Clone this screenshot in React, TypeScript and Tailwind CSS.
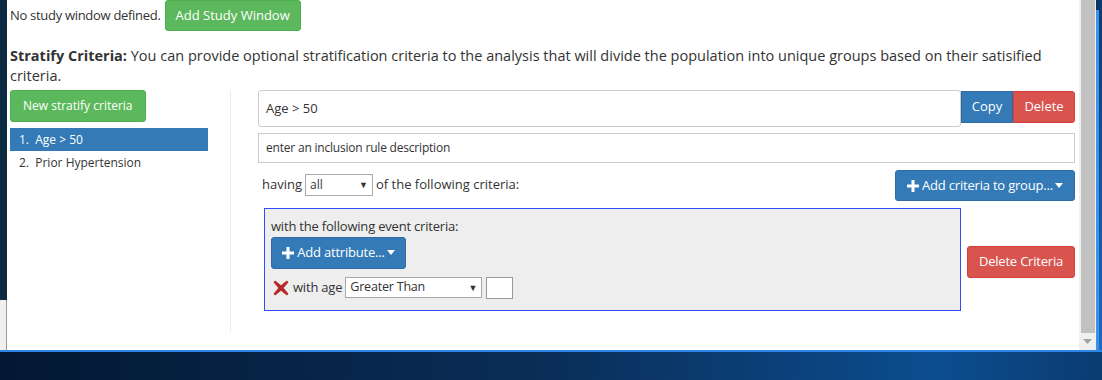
const font = { fontFamily: '"Open Sans", "Noto Sans", sans-serif' };

const Caret = () => (
  <svg width="8" height="5" viewBox="0 0 8 5" className="ml-[2px]">
    <path d="M0 0h8L4 5z" fill="currentColor" />
  </svg>
);

const Plus = () => (
  <svg width="12" height="12" viewBox="0 0 12 12" className="mr-[3px]">
    <path d="M4.5 0h3v4.5H12v3H7.5V12h-3V7.5H0v-3h4.5z" fill="currentColor" />
  </svg>
);

const RedX = () => (
  <svg width="16" height="16" viewBox="0 0 15 15">
    <path d="M2 0.5L7.5 5 13 0.5 14.5 2 10 7.5 14.5 13 13 14.5 7.5 10 2 14.5 0.5 13 5 7.5 0.5 2z" fill="#b52a2a" />
  </svg>
);

const App = () => {
  return (
    <div className="w-[1102px] h-[380px] overflow-hidden flex flex-col bg-[#06203d] text-[#333]" style={font}>
      <div className="h-[350px] flex">
        <div className="w-[7px] flex flex-col">
          <div className="h-[300px] bg-[#0c2b42]" />
          <div className="flex-1 bg-[#efefef] border-r border-[#999]" />
        </div>
        <div className="flex-1 bg-white flex flex-col pl-[3px]">
          <div className="flex items-start gap-[4px]">
            <span className="text-[13px] pt-[6px] tracking-[-0.3px]">No study window defined.</span>
            <button className="h-[31px] px-[10px] rounded-[3px] bg-[#5cb85c] border border-[#4cae4c] text-white text-[13px]">
              Add Study Window
            </button>
          </div>
          <p className="text-[14.5px] leading-[20px] mt-[15px] pr-[20px]">
            <b>Stratify Criteria:</b> You can provide optional stratification criteria to the analysis that will divide the population into unique groups based on their satisified criteria.
          </p>
          <div className="flex mt-[4px] flex-1">
            <div className="w-[198px] flex flex-col">
              <button className="self-start h-[32px] px-[12px] rounded-[3px] bg-[#5cb85c] border border-[#4cae4c] text-white text-[12px]">
                New stratify criteria
              </button>
              <div className="mt-[6px] h-[23px] bg-[#337ab7] text-white text-[12px] flex items-center pl-[9px]">1.&nbsp; Age &gt; 50</div>
              <div className="h-[23px] text-[12px] flex items-center pl-[9px]">2.&nbsp; Prior Hypertension</div>
            </div>
            <div className="w-[22px]" />
            <div className="w-[1px] bg-[#eee] h-[243px]" />
            <div className="flex-1 pl-[27px] pr-[4px] flex flex-col">
              <div className="flex items-start">
                <div className="flex-1 h-[37px] border border-[#ccc] rounded-[3px] flex items-center pl-[7px] text-[13px]">Age &gt; 50</div>
                <button className="mt-[1px] h-[32px] w-[52px] bg-[#337ab7] border border-[#2e6da4] text-white text-[13px]">Copy</button>
                <button className="mt-[1px] h-[32px] w-[62px] bg-[#d9534f] border border-[#d43f3a] rounded-r-[3px] text-white text-[13px]">Delete</button>
              </div>
              <div className="mt-[6px] h-[30px] border border-[#ccc] flex items-center pl-[7px] text-[12px] tracking-[-0.2px]">enter an inclusion rule description</div>
              <div className="mt-[7px] flex items-start justify-between">
                <div className="flex items-center text-[13px] pt-[4px] pl-[4px]">
                  having
                  <span className="mx-[3px] w-[68px] h-[22px] border border-[#a9a9a9] flex items-center justify-between px-[4px] text-[12px]">
                    all<span className="text-[9px]">▼</span>
                  </span>
                  of the following criteria:
                </div>
                <button className="h-[31px] w-[180px] rounded-[3px] bg-[#337ab7] border border-[#2e6da4] text-white text-[13px] flex items-center justify-center tracking-[-0.2px]">
                  <Plus />Add criteria to group...<Caret />
                </button>
              </div>
              <div className="mt-[7px] flex items-center">
                <div className="ml-[6px] w-[697px] h-[103px] bg-[#eee] border border-[#2f4cff] pl-[6px] pt-[8px] flex flex-col">
                  <span className="text-[13px] tracking-[-0.2px]">with the following event criteria:</span>
                  <button className="self-start h-[32px] w-[135px] rounded-[3px] bg-[#337ab7] border border-[#2e6da4] text-white text-[13px] flex items-center justify-center tracking-[-0.2px]">
                    <Plus />Add attribute...<Caret />
                  </button>
                  <div className="mt-[8px] flex items-center text-[13px] tracking-[-0.2px]">
                    <span className="ml-[2px] mr-[4px]"><RedX /></span>
                    with age
                    <span className="ml-[3px] w-[137px] h-[21px] bg-white border border-[#a9a9a9] flex items-center justify-between px-[4px] text-[12.5px]">
                      Greater Than<span className="text-[9px]">▼</span>
                    </span>
                    <span className="ml-[4px] w-[27px] h-[22px] bg-white border border-[#999]" />
                  </div>
                </div>
                <button className="ml-[6px] mt-[5px] h-[32px] w-[108px] rounded-[3px] bg-[#d9534f] border border-[#d43f3a] text-white text-[13px] tracking-[-0.2px]">Delete Criteria</button>
              </div>
            </div>
          </div>
        </div>
        <div className="w-[17px] bg-[#f0f0f0] flex flex-col items-center">
          <div className="w-[14px] h-[333px] bg-[#c1c1c1]" />
          <svg width="9" height="5" viewBox="0 0 9 5" className="mt-[6px]"><path d="M0 0h9L4.5 5z" fill="#a3a3a3" /></svg>
        </div>
        <div className="w-[3px] flex flex-col">
          <div className="h-[10px] bg-[#0a3360]" />
          <div className="flex-1 bg-[#3d92e8]" />
        </div>
        <div className="flex-1 bg-[linear-gradient(180deg,#0a3a6e,#1a6bc4)]" />
      </div>
      <div className="h-[2px] bg-[#2e86e8]" />
      <div className="flex-1 bg-[linear-gradient(90deg,#031833_0%,#0a2e58_50%,#0c4d8f_85%,#0a3c70_100%)]" />
    </div>
  );
};

export default App;
